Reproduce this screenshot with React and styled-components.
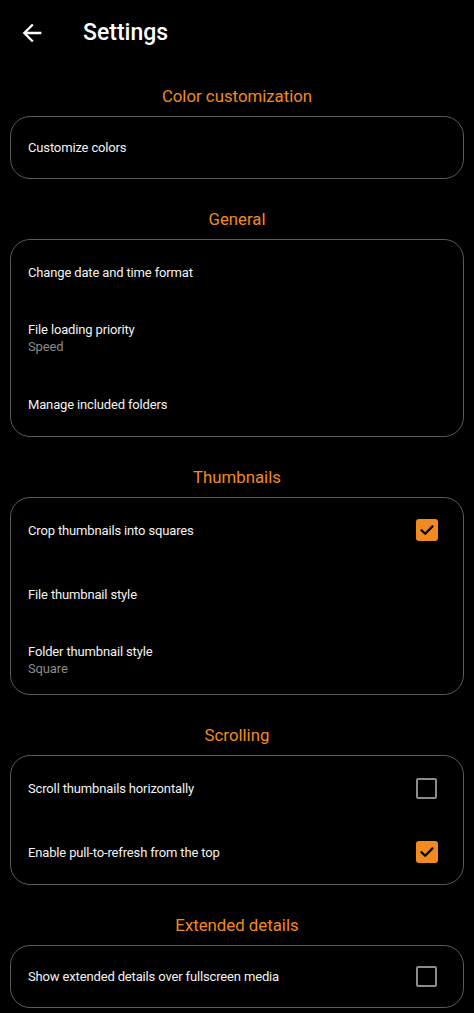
import React from "react";
import styled, { createGlobalStyle } from "styled-components";

const GlobalStyle = createGlobalStyle`
  html, body {
    margin: 0;
    padding: 0;
    background: #000000;
  }
  body {
    font-family: Roboto, "Noto Sans", "Liberation Sans", sans-serif;
    color: #ffffff;
    -webkit-font-smoothing: antialiased;
  }
`;

const sections = [
  {
    title: "Color customization",
    items: [{ label: "Customize colors" }],
  },
  {
    title: "General",
    items: [
      { label: "Change date and time format" },
      { label: "File loading priority", value: "Speed" },
      { label: "Manage included folders" },
    ],
  },
  {
    title: "Thumbnails",
    items: [
      { label: "Crop thumbnails into squares", checked: true },
      { label: "File thumbnail style" },
      { label: "Folder thumbnail style", value: "Square" },
    ],
  },
  {
    title: "Scrolling",
    items: [
      { label: "Scroll thumbnails horizontally", checked: false },
      { label: "Enable pull-to-refresh from the top", checked: true },
    ],
  },
  {
    title: "Extended details",
    items: [
      { label: "Show extended details over fullscreen media", checked: false },
    ],
  },
];

const BackArrow = () => (
  <svg width="28" height="28" viewBox="0 0 24 24" fill="#ffffff">
    <path d="M20 11H7.83l5.59-5.59L12 4l-8 8 8 8 1.41-1.41L7.83 13H20v-2z" />
  </svg>
);

const CheckBox = ({ checked }) =>
  checked ? (
    <BoxChecked>
      <svg width="22" height="22" viewBox="0 0 22 22">
        <polyline
          points="5.5,11.2 9.2,14.8 16.5,7.4"
          fill="none"
          stroke="#000000"
          strokeWidth="2.3"
          strokeLinecap="round"
          strokeLinejoin="round"
        />
      </svg>
    </BoxChecked>
  ) : (
    <BoxEmpty />
  );

const App = () => {
  return (
    <Page>
      <GlobalStyle />
      <Header>
        <BackButton>
          <BackArrow />
        </BackButton>
        <Title>Settings</Title>
      </Header>
      {sections.map((section) => (
        <Section key={section.title}>
          <SectionTitle>{section.title}</SectionTitle>
          <Card>
            {section.items.map((item) => (
              <Row
                key={item.label}
                $tall={!!item.value}
                $solo={section.items.length === 1}
              >
                <RowText>
                  <Label>{item.label}</Label>
                  {item.value && <Value>{item.value}</Value>}
                </RowText>
                {item.checked !== undefined && (
                  <CheckBox checked={item.checked} />
                )}
              </Row>
            ))}
          </Card>
        </Section>
      ))}
    </Page>
  );
};

const Page = styled.div`
  width: 474px;
  min-height: 1013px;
  background: #000000;
  display: flex;
  flex-direction: column;
  padding-bottom: 20px;
`;

const Header = styled.div`
  height: 46px;
  padding-top: 10px;
  display: flex;
  flex-direction: row;
  align-items: center;
`;

const BackButton = styled.div`
  width: 28px;
  height: 28px;
  margin-left: 18px;
  display: flex;
`;

const Title = styled.h1`
  margin: 0 0 0 37px;
  font-size: 23px;
  font-weight: 500;
  color: #ffffff;
  line-height: 26px;
`;

const Section = styled.div`
  display: flex;
  flex-direction: column;
`;

const SectionTitle = styled.div`
  padding: 30px 0 10px;
  text-align: center;
  font-size: 16.8px;
  line-height: 20px;
  color: #f28b1f;
`;

const Card = styled.div`
  margin: 0 10px;
  border: 1px solid #5a5a5a;
  border-radius: 20px;
  display: flex;
  flex-direction: column;
`;

const Row = styled.div`
  min-height: ${(p) => (p.$solo ? "61px" : p.$tall ? "68px" : "64px")};
  padding: 0 25px 0 17px;
  display: flex;
  flex-direction: row;
  align-items: center;
  justify-content: space-between;
`;

const RowText = styled.div`
  display: flex;
  flex-direction: column;
`;

const Label = styled.div`
  font-size: 13px;
  line-height: 17px;
  letter-spacing: -0.15px;
  color: #f2f2f2;
`;

const Value = styled.div`
  font-size: 13px;
  line-height: 17px;
  letter-spacing: -0.15px;
  color: #8a8a8a;
`;

const BoxChecked = styled.div`
  width: 22px;
  height: 22px;
  border-radius: 3px;
  background: #f28b1f;
  display: flex;
`;

const BoxEmpty = styled.div`
  width: 17px;
  height: 17px;
  margin: 0 1px 0 0;
  border: 2px solid #8c8c8c;
  border-radius: 2px;
`;

export default App;
